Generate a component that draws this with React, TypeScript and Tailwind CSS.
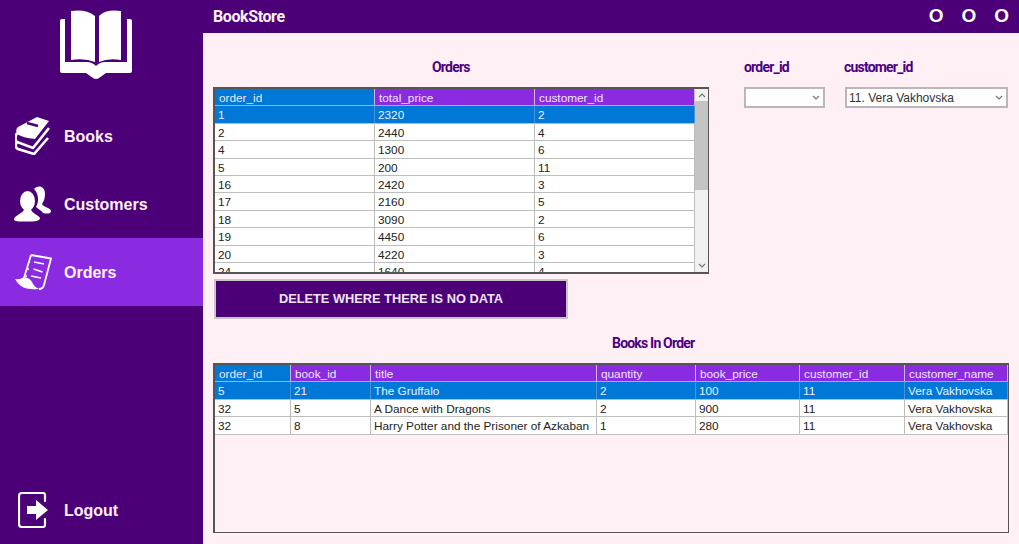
import type { ReactNode } from "react";

const ordersCols = [160, 160, 160];
const ordersRows = [
  ["1", "2320", "2"],
  ["2", "2440", "4"],
  ["4", "1300", "6"],
  ["5", "200", "11"],
  ["16", "2420", "3"],
  ["17", "2160", "5"],
  ["18", "3090", "2"],
  ["19", "4450", "6"],
  ["20", "4220", "3"],
  ["24", "1640", "4"],
];

const bookCols = [76, 80, 226, 99, 104, 105, 103];
const bookRows = [
  ["5", "21", "The Gruffalo", "2", "100", "11", "Vera Vakhovska"],
  ["32", "5", "A Dance with Dragons", "2", "900", "11", "Vera Vakhovska"],
  ["32", "8", "Harry Potter and the Prisoner of Azkaban", "1", "280", "11", "Vera Vakhovska"],
];

function Grid({ head, rows, cols }: { head: string[]; rows: string[][]; cols: number[] }) {
  return (
    <div className="flex flex-col">
      <div className="flex h-[17.4px] shrink-0 border-b border-[#b9a6d6] leading-[18px]">
        {head.map((h, i) => (
          <div
            key={h}
            style={{ width: cols[i] }}
            className={`shrink-0 border-r border-[#c9b8e6] pl-[4px] text-[#efe6fb] ${i === 0 ? "bg-[#0078d7]" : "bg-[#8a2be2]"}`}
          >
            {h}
          </div>
        ))}
      </div>
      {rows.map((row, r) => (
        <div key={r} className="flex h-[17.4px] shrink-0 border-b border-[#bdbdbd] leading-[18px]">
          {row.map((c, i) => (
            <div
              key={i}
              style={{ width: cols[i] }}
              className={`shrink-0 overflow-hidden whitespace-nowrap pl-[3px] ${
                r === 0 ? "border-r border-[#4a94d6] bg-[#0078d7] text-[#e8f2fb]" : "border-r border-[#bdbdbd] bg-white text-[#222]"
              }`}
            >
              {c}
            </div>
          ))}
        </div>
      ))}
    </div>
  );
}

function Chevron({ up = false, className = "" }: { up?: boolean; className?: string }) {
  return (
    <svg viewBox="0 0 8 5" className={`h-[5px] w-[8px] ${className}`} fill="none" stroke="#777" strokeWidth="1.2">
      <path d={up ? "M1 4 L4 1 L7 4" : "M1 1 L4 4 L7 1"} />
    </svg>
  );
}

function Select({ value, width }: { value?: string; width: string }) {
  return (
    <div className={`flex h-[21px] items-center justify-between border-2 border-[#b8b8b8] bg-white pl-[2px] pr-[3px] text-[12px] text-[#333] ${width}`}>
      <span>{value}</span>
      <Chevron />
    </div>
  );
}

function LogoIcon() {
  return (
    <svg viewBox="60 10 73 70" className="h-[70px] w-[73px]" fill="#fff">
      <path d="M60 21 Q60 19 62 19 H65 V62 H87 Q92 62 96 66 Q100 62 105 62 H127 V19 H130 Q132 19 132 21 V71 Q132 73 130 73 H106 L99 78 Q96 80 93 78 L86 73 H62 Q60 73 60 71 Z" />
      <path d="M71 11 Q86 9 95 16 V62 Q85 58 71 60 Z" />
      <path d="M121 11 Q106 9 99 16 V62 Q108 58 121 60 Z" />
    </svg>
  );
}

function BooksIcon() {
  return (
    <svg viewBox="0 0 36 38" className="h-[38px] w-[36px]" fill="none" stroke="#fff">
      <path d="M22 0 L34 4 L20 22 Q8 21 2 17 Q0 13 3 10 Z" fill="#fff" stroke="none" />
      <path d="M12 6 L23 9" stroke="#4b0078" strokeWidth="2.4" />
      <path d="M2 16 Q-1 22 2 25 L18 31 L34 11" strokeWidth="2.6" />
      <path d="M2 25 Q-1 30 3 32 L19 37 L33 21" strokeWidth="2.6" />
    </svg>
  );
}

function CustomersIcon() {
  return (
    <svg viewBox="0 0 38 36" className="h-[36px] w-[38px]" fill="#fff">
      <path d="M20 3 C23 -1 31 -1 31 8 C31 14 29 16 28 18 C29 21 37 22 37 25 C37 28 33 28 29 27 C27 24 24 23 22 21 C25 16 25 8 20 3 Z" />
      <ellipse cx="13.5" cy="15" rx="7.5" ry="10" />
      <path d="M10 23 C10 27 1 29 0 33 C0 36 5 35.5 13 35.5 C21 35.5 26 35 26 32 C25 29 17 27 17 23 Z" />
    </svg>
  );
}

function OrdersIcon() {
  return (
    <svg viewBox="0 0 37 37" className="h-[37px] w-[37px]" fill="none" stroke="#fff" strokeWidth="1.8">
      <path d="M16 1 L36 4.5 L29 31 Q28 35 24 35 M16 1 L9 24" strokeLinejoin="round" />
      <path d="M0 25 Q5 26 9 23 Q15 24 17 28 Q19 33 24 35 Q12 36 6 32 Q2 29 0 25 Z" fill="#fff" stroke="none" />
      <path d="M13.5 8 L15 8.3 M12.5 15 L14 15.3 M10.5 22 L12 22.3 M19 8 L29 10 M18.5 15 L27.5 18 M16 22 L26 24" strokeWidth="1.6" />
    </svg>
  );
}

function LogoutIcon() {
  return (
    <svg viewBox="0 0 30 36" className="h-[36px] w-[30px]" fill="none" stroke="#fff" strokeWidth="2.2">
      <path d="M27 9 V3 Q27 1 25 1 H4 Q1 1 1 4 V32 Q1 35 4 35 H25 Q27 35 27 33 V27" strokeLinecap="round" />
      <path d="M9 14 H18 V8 L30 18 L18 28 V22 H9 Z" fill="#fff" stroke="none" />
    </svg>
  );
}

function NavItem({ icon, label, active = false }: { icon: ReactNode; label: string; active?: boolean }) {
  return (
    <div className={`flex h-[68px] items-center ${active ? "bg-[#8a2be2]" : ""}`}>
      <div className="flex w-[64px] justify-center pl-[2px]">{icon}</div>
      <span className="pt-px text-[16px] font-bold text-[#fff0f5]">{label}</span>
    </div>
  );
}

function Title({ children }: { children: ReactNode }) {
  return <div className="font-['Roboto',sans-serif] text-[14px] font-bold tracking-[-0.8px] text-[#4b0082]">{children}</div>;
}

export default function App() {
  return (
    <div className="flex h-[544px] w-[1019px] overflow-hidden bg-[#fff0f5] font-['Liberation_Sans',Arial,sans-serif] text-[11.8px]">
      <aside className="flex w-[203px] shrink-0 flex-col bg-[#4b0078]">
        <div className="flex h-[102px] justify-center pt-[10px] pr-[11px]">
          <LogoIcon />
        </div>
        <NavItem icon={<BooksIcon />} label="Books" />
        <NavItem icon={<CustomersIcon />} label="Customers" />
        <NavItem icon={<OrdersIcon />} label="Orders" active />
        <div className="mt-auto mb-0">
          <NavItem icon={<LogoutIcon />} label="Logout" />
        </div>
      </aside>

      <main className="flex min-w-0 flex-1 flex-col">
        <header className="flex h-[33px] shrink-0 items-center justify-between bg-[#4b0078] pl-[10px] pr-[10px]">
          <span className="font-['Roboto',sans-serif] text-[16px] font-bold tracking-[-0.4px] text-[#fff0f5]">BookStore</span>
          <div className="flex gap-[18px] text-[19px] font-bold text-white">
            <span>O</span>
            <span>O</span>
            <span>O</span>
          </div>
        </header>

        <div className="flex flex-col pl-[10px] pr-[10px]">
          <div className="flex">
            <section className="w-[496px] shrink-0">
              <div className="flex h-[54px] items-center pl-[219px] pt-[14px]">
                <Title>Orders</Title>
              </div>
              <div className="flex h-[187px] overflow-hidden border-2 border-[#555] border-r-[1.5px] bg-white">
                <Grid head={["order_id", "total_price", "customer_id"]} rows={ordersRows} cols={ordersCols} />
                <div className="flex flex-1 flex-col items-center bg-[#f0f0f0]">
                  <div className="flex h-[12px] items-center">
                    <Chevron up />
                  </div>
                  <div className="h-[89px] w-full bg-[#c4c4c4]" />
                  <div className="mt-auto flex h-[14px] items-center">
                    <Chevron />
                  </div>
                </div>
              </div>
              <button className="mt-[5px] ml-px flex h-[40px] w-[354px] items-center justify-center border-2 border-[#c6c6c6] bg-[#4b0078] text-[12.8px] font-bold text-[#f0e4f6]">
                DELETE WHERE THERE IS NO DATA
              </button>
            </section>

            <section className="ml-[35px] flex gap-[19px]">
              <div className="w-[81px]">
                <div className="flex h-[54px] items-center pt-[14px]">
                  <Title>order_id</Title>
                </div>
                <Select width="w-[81px]" />
              </div>
              <div>
                <div className="flex h-[54px] items-center pt-[14px]">
                  <Title>customer_id</Title>
                </div>
                <div className="ml-px">
                  <Select value="11. Vera Vakhovska" width="w-[163px]" />
                </div>
              </div>
            </section>
          </div>

          <div className="flex h-[44px] items-center pl-[399px] pt-[4px]">
            <Title>Books In Order</Title>
          </div>

          <section className="h-[170px] overflow-hidden border-2 border-[#555] border-r-[1.5px] border-b-[1.5px]">
            <Grid
              head={["order_id", "book_id", "title", "quantity", "book_price", "customer_id", "customer_name"]}
              rows={bookRows}
              cols={bookCols}
            />
          </section>
        </div>
      </main>
    </div>
  );
}
